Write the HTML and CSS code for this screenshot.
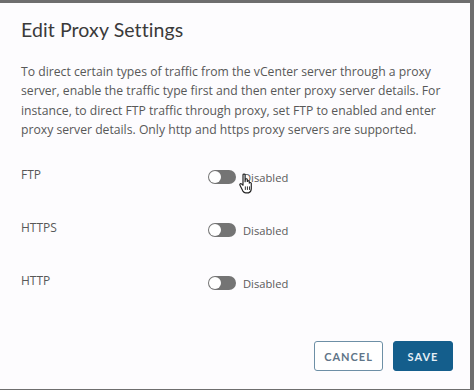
FILE: index.html
```html
<!DOCTYPE html>
<html>
<head>
<meta charset="utf-8">
<link rel="stylesheet" href="styles.css">
</head>
<body>
<div class="modal">
  <h1 class="title">Edit Proxy Settings</h1>
  <p class="desc">To direct certain types of traffic from the vCenter server through a proxy server, enable the traffic type first and then enter proxy server details. For instance, to direct FTP traffic through proxy, set FTP to enabled and enter proxy server details. Only http and https proxy servers are supported.</p>
  <div class="rows">
    <div class="row">
      <span class="label">FTP</span>
      <span class="toggle"><span class="track"><span class="knob"></span></span><span class="state">Disabled</span>
        <svg class="cursor" width="17" height="21" viewBox="0 0 14 18"><path d="M4 1.5c0-.8 1.8-.8 1.8 0v6l.2-2c.3-.8 1.6-.7 1.7.1v1.7c.2-.9 1.5-.9 1.7 0v1.4c.3-.8 1.6-.7 1.7.2v4.6c0 1.6-1 3-2.4 3.5H6.2c-1 0-1.7-.6-2.3-1.5L1.4 10.4c-.5-.8.4-1.8 1.3-1.1L4 10.5z" fill="#fff" stroke="#222" stroke-width="1" stroke-linejoin="round"/><path d="M6 11.5v3M7.8 11.5v3M9.6 11.5v3" stroke="#222" stroke-width=".8"/></svg>
      </span>
    </div>
    <div class="row">
      <span class="label">HTTPS</span>
      <span class="toggle"><span class="track"><span class="knob"></span></span><span class="state">Disabled</span></span>
    </div>
    <div class="row">
      <span class="label">HTTP</span>
      <span class="toggle"><span class="track"><span class="knob"></span></span><span class="state">Disabled</span></span>
    </div>
  </div>
  <div class="footer">
    <button class="btn btn-outline">CANCEL</button>
    <button class="btn btn-primary">SAVE</button>
  </div>
</div>
</body>
</html>
```
FILE: styles.css
```css
html, body {
  margin: 0;
  padding: 0;
  background: #6e6e6e;
  height: 390px;
  overflow: hidden;
}
body {
  padding-top: 3px;
  font-family: "Open Sans", Lato, sans-serif;
}
.modal {
  width: 470px;
  height: 386px;
  background: #fdfcfe;
  box-sizing: border-box;
  padding: 13px 17px 0 21px;
  display: flex;
  flex-direction: column;
}
.title {
  margin: 0;
  font-family: Lato, "Open Sans", sans-serif;
  font-size: 19.5px;
  font-weight: 400;
  color: #3a3a3a;
  line-height: 28px;
  letter-spacing: 0.1px;
}
.desc {
  margin: 17.5px 0 0 0;
  font-size: 12.2px;
  line-height: 19.6px;
  color: #585858;
  width: 432px;
}
.rows {
  margin-top: 27px;
  display: flex;
  flex-direction: column;
  gap: 33px;
}
.row {
  display: flex;
  align-items: flex-start;
  height: 20px;
}
.label {
  width: 187px;
  font-size: 12px;
  color: #585858;
  line-height: 16px;
}
.toggle {
  position: relative;
  display: flex;
  align-items: center;
  margin-top: 3px;
}
.track {
  width: 28px;
  height: 14px;
  border-radius: 7px;
  background: #747474;
  position: relative;
}
.knob {
  position: absolute;
  left: 1px;
  top: 1px;
  width: 12px;
  height: 12px;
  border-radius: 50%;
  background: #fff;
}
.state {
  margin-left: 7px;
  font-size: 11.2px;
  color: #5a5a5a;
}
.cursor {
  position: absolute;
  left: 30px;
  top: 3px;
}
.footer {
  margin-top: auto;
  margin-bottom: 18px;
  display: flex;
  justify-content: flex-end;
  gap: 10px;
}
.btn {
  height: 30px;
  border-radius: 3px;
  font-family: Lato, "Open Sans", sans-serif;
  font-size: 11px;
  font-weight: 700;
  letter-spacing: 1px;
  padding: 0;
  box-sizing: border-box;
}
.btn-outline {
  width: 69px;
  background: #fff;
  border: 1px solid #6d8fa6;
  color: #5f7588;
}
.btn-primary {
  width: 60px;
  background: #145e8c;
  border: 1px solid #145e8c;
  color: #e4eef6;
}
```
